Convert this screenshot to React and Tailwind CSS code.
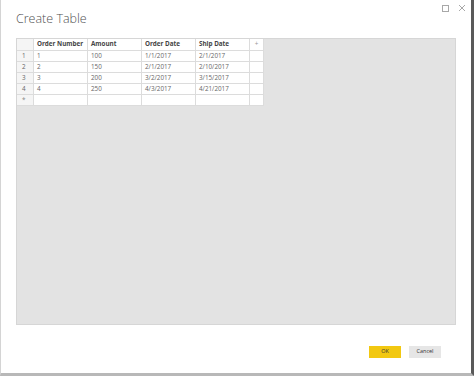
import React from "react";

const rows = [
  ["1", "1", "100", "1/1/2017", "2/1/2017"],
  ["2", "2", "150", "2/1/2017", "2/10/2017"],
  ["3", "3", "200", "3/2/2017", "3/15/2017"],
  ["4", "4", "250", "4/3/2017", "4/21/2017"],
];

const headers = ["Order Number", "Amount", "Order Date", "Ship Date"];

export default function App() {
  return (
    <div
      className="w-[474px] h-[376px] bg-white flex flex-col border-l border-[#d4d4d4] border-r-[3px] border-r-[#5a5a5a] border-b-[3px] border-b-[#b8b8b8] overflow-hidden"
      style={{ fontFamily: "'Open Sans', 'Liberation Sans', sans-serif" }}
    >
      {/* Title bar */}
      <div className="flex items-start h-[38px] pl-[15px] pr-[5px]">
        <div className="pt-[10px] text-[12.5px] font-light text-[#505050] flex-1 leading-[18px]">
          Create Table
        </div>
        <div className="flex items-center gap-[9px] pt-[4px] text-[#a0a0a0]">
          <div className="w-[7px] h-[7px] border border-[#a8a8a8]" />
          <svg width="8" height="8" viewBox="0 0 8 8" stroke="#a8a8a8" strokeWidth="1">
            <path d="M1 1L7 7M7 1L1 7" />
          </svg>
        </div>
      </div>

      {/* Grid area */}
      <div className="ml-[15px] w-[440px] h-[287px] bg-[#e3e3e3] border border-[#d6d6d6]">
        <div className="w-fit bg-white text-[6.3px] text-[#555] leading-none">
          <div className="flex h-[12px] border-b border-[#dcdcdc]">
            <div className="w-[17px] border-r border-[#dcdcdc] bg-[#f5f5f5]" />
            {headers.map((h) => (
              <div
                key={h}
                className="w-[54px] border-r border-[#dcdcdc] flex items-center pl-[3px] font-bold text-[#444]"
              >
                {h}
              </div>
            ))}
            <div className="w-[14px] flex items-center justify-center text-[#999] border-r border-[#dcdcdc]">
              +
            </div>
          </div>
          {rows.map((r) => (
            <div key={r[0]} className="flex h-[11px] border-b border-[#dcdcdc]">
              <div className="w-[17px] border-r border-[#dcdcdc] bg-[#f5f5f5] flex items-center pl-[5px] text-[#666]">
                {r[0]}
              </div>
              {r.slice(1).map((c, i) => (
                <div
                  key={i}
                  className="w-[54px] border-r border-[#dcdcdc] flex items-center pl-[3px] text-[#666]"
                >
                  {c}
                </div>
              ))}
              <div className="w-[14px] border-r border-[#dcdcdc]" />
            </div>
          ))}
          <div className="flex h-[11px] border-b border-[#dcdcdc]">
            <div className="w-[17px] border-r border-[#dcdcdc] bg-[#f5f5f5] flex items-center pl-[5px] text-[#888]">
              *
            </div>
            {headers.map((h) => (
              <div key={h} className="w-[54px] border-r border-[#dcdcdc]" />
            ))}
            <div className="w-[14px] border-r border-[#dcdcdc]" />
          </div>
        </div>
      </div>

      {/* Buttons */}
      <div className="flex justify-end gap-[8px] pr-[30px] pt-[21px]">
        <button className="w-[32px] h-[12px] bg-[#f2c811] text-[5.5px] text-[#333] leading-none">
          OK
        </button>
        <button className="w-[32px] h-[12px] bg-[#e6e6e6] text-[5.5px] text-[#333] leading-none">
          Cancel
        </button>
      </div>
    </div>
  );
}
